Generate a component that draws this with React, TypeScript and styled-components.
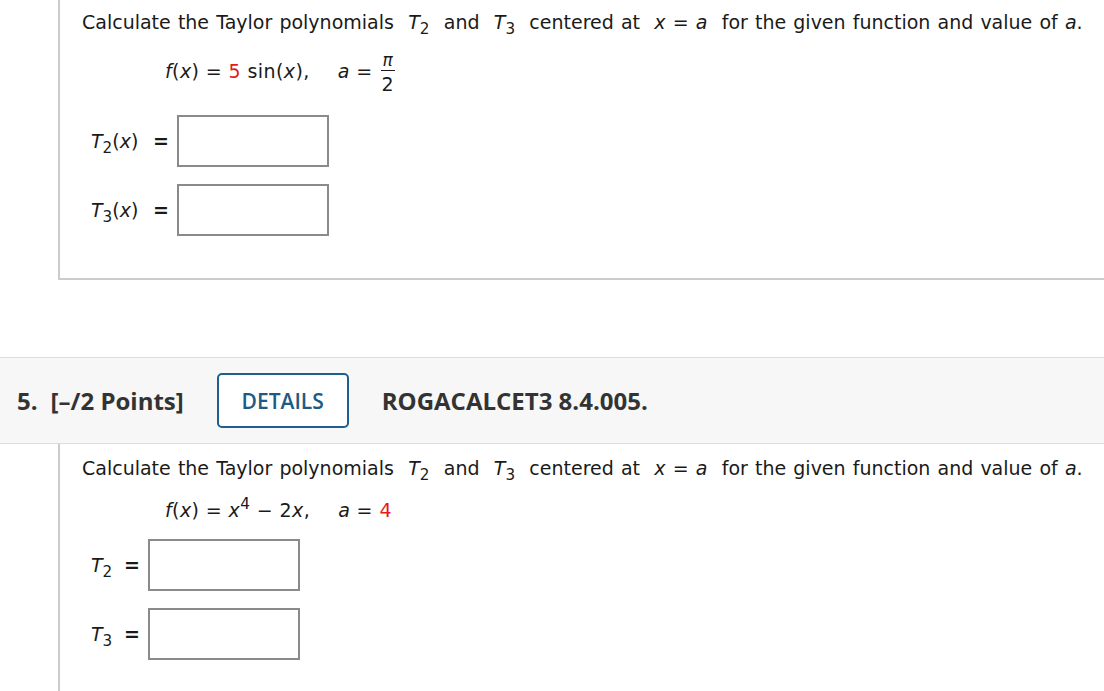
import React from "react";
import styled, { createGlobalStyle } from "styled-components";

const Global = createGlobalStyle`
  html, body { margin: 0; padding: 0; background: #ffffff; }
  body { font-family: "DejaVu Sans", Verdana, sans-serif; color: #1a1a1a; }
`;

const Page = styled.div`
  width: 1104px;
  height: 691px;
  overflow: hidden;
  background: #ffffff;
`;

const Panel = styled.div<{ $bottom?: boolean; $top: number }>`
  margin-left: 58px;
  border-left: 2px solid #cccccc;
  ${(p) => (p.$bottom ? "border-bottom: 2px solid #cccccc;" : "")}
  padding: ${(p) => p.$top}px 0 ${(p) => (p.$bottom ? "42px" : "40px")} 22px;
`;

const Question = styled.div`
  font-size: 19px;
  line-height: 26px;
  white-space: nowrap;
  word-spacing: 1.1px;
`;

const I = styled.span`
  font-style: italic;
`;

const Sub = styled.sub`
  font-size: 0.8em;
  vertical-align: -0.3em;
  line-height: 0;
  font-style: normal;
`;

const Sup = styled.sup`
  font-size: 0.8em;
  vertical-align: 0.55em;
  line-height: 0;
  font-style: normal;
`;

const Red = styled.span`
  color: #e31b1b;
`;

const Formula = styled.div<{ $h: number }>`
  display: flex;
  align-items: center;
  height: ${(p) => p.$h}px;
  padding-left: 83px;
  font-size: 19px;
`;

const MathLine = styled.span`
  white-space: pre;
  line-height: 26px;
  letter-spacing: 0.4px;
`;

const Gap = styled.span<{ $w: number }>`
  display: inline-block;
  width: ${(p) => p.$w}px;
`;

const Frac = styled.span`
  display: inline-flex;
  flex-direction: column;
  align-items: center;
  vertical-align: middle;
  margin-left: 8px;
`;

const Num = styled.span`
  font-style: italic;
  border-bottom: 1px solid #1a1a1a;
  padding: 0 2px 0;
  font-size: 17px;
  line-height: 20px;
`;

const Den = styled.span`
  font-size: 19px;
  line-height: 22px;
  padding-top: 2px;
`;

const Answers = styled.div<{ $top: number }>`
  display: flex;
  flex-direction: column;
  gap: 17px;
  margin-top: ${(p) => p.$top}px;
`;

const AnswerRow = styled.div`
  display: flex;
  align-items: center;
  font-size: 19px;
  padding-left: 9px;
`;

const Label = styled.span<{ $w: number }>`
  display: inline-block;
  width: ${(p) => p.$w}px;
  white-space: nowrap;
`;

const Eq = styled.span<{ $w: number }>`
  display: inline-block;
  width: ${(p) => p.$w}px;
  font-size: 19px;
  font-weight: 700;
`;

const Box = styled.div`
  width: 148px;
  height: 48px;
  border: 2px solid #8a8a8a;
  background: #ffffff;
`;

const Header = styled.div`
  margin-top: 77px;
  height: 85px;
  border-top: 1px solid #dddddd;
  border-bottom: 1px solid #dddddd;
  background: #f7f7f7;
  display: flex;
  align-items: center;
  padding-left: 17px;
  font-family: "Open Sans", sans-serif;
  font-weight: 700;
  font-size: 24px;
  color: #333333;
`;

const Num5 = styled.span`
  margin-right: 13px;
`;

const Points = styled.span``;

const DetailsButton = styled.button`
  margin-left: 33px;
  width: 132px;
  height: 55px;
  border: 2px solid #1f5f8b;
  border-radius: 5px;
  background: #ffffff;
  color: #1f5a85;
  font-family: "Open Sans", sans-serif;
  font-weight: 600;
  font-size: 21px;
  padding: 0;
`;

const Code = styled.span`
  margin-left: 33px;
`;

export default function App() {
  return (
    <Page>
      <Global />
      <Panel $bottom $top={9}>
        <Question>
          Calculate the Taylor polynomials&nbsp; <I>T</I>
          <Sub>2</Sub>&nbsp; and&nbsp; <I>T</I>
          <Sub>3</Sub>&nbsp; centered at&nbsp; <I>x</I> = <I>a</I>&nbsp; for the
          given function and value of <I>a</I>.
        </Question>
        <Formula $h={74}>
          <MathLine>
            <I>f</I>(<I>x</I>) = <Red>5</Red> sin(<I>x</I>),<Gap $w={28} />
            <I>a</I> =
            <Frac>
              <Num>π</Num>
              <Den>2</Den>
            </Frac>
          </MathLine>
        </Formula>
        <Answers $top={6}>
          <AnswerRow>
            <Label $w={62}>
              <I>T</I>
              <Sub>2</Sub>(<I>x</I>)
            </Label>
            <Eq $w={24}>=</Eq>
            <Box />
          </AnswerRow>
          <AnswerRow>
            <Label $w={62}>
              <I>T</I>
              <Sub>3</Sub>(<I>x</I>)
            </Label>
            <Eq $w={24}>=</Eq>
            <Box />
          </AnswerRow>
        </Answers>
      </Panel>

      <Header>
        <Num5>5.</Num5>
        <Points>[–/2 Points]</Points>
        <DetailsButton>DETAILS</DetailsButton>
        <Code>ROGACALCET3 8.4.005.</Code>
      </Header>

      <Panel $top={11}>
        <Question>
          Calculate the Taylor polynomials&nbsp; <I>T</I>
          <Sub>2</Sub>&nbsp; and&nbsp; <I>T</I>
          <Sub>3</Sub>&nbsp; centered at&nbsp; <I>x</I> = <I>a</I>&nbsp; for the
          given function and value of <I>a</I>.
        </Question>
        <Formula $h={58}>
          <MathLine>
            <I>f</I>(<I>x</I>) = <I>x</I>
            <Sup>4</Sup> − 2<I>x</I>,<Gap $w={28} />
            <I>a</I> = <Red>4</Red>
          </MathLine>
        </Formula>
        <Answers $top={0}>
          <AnswerRow>
            <Label $w={33}>
              <I>T</I>
              <Sub>2</Sub>
            </Label>
            <Eq $w={24}>=</Eq>
            <Box />
          </AnswerRow>
          <AnswerRow>
            <Label $w={33}>
              <I>T</I>
              <Sub>3</Sub>
            </Label>
            <Eq $w={24}>=</Eq>
            <Box />
          </AnswerRow>
        </Answers>
      </Panel>
    </Page>
  );
}
